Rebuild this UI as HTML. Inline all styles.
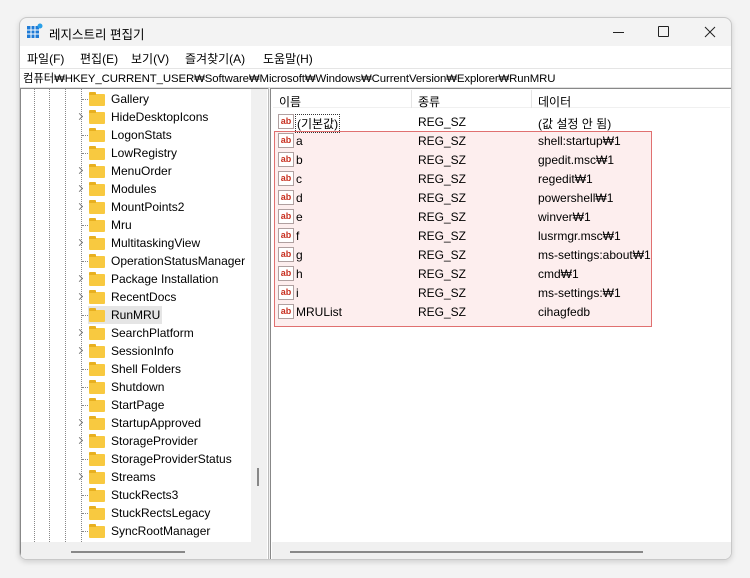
<!DOCTYPE html>
<html><head><meta charset="utf-8"><style>
*{margin:0;padding:0;box-sizing:border-box}
body{width:750px;height:578px;background:#f3f3f3;position:relative;overflow:hidden;font-family:"Liberation Sans","Noto Sans CJK KR",sans-serif;font-size:12px;color:#000}
.win{position:absolute;left:19px;top:17px;width:713px;height:543px;background:#f3f3f3;border:1px solid #c8c8c8;border-radius:8px;box-shadow:0 2px 6px rgba(0,0,0,.15);overflow:hidden}
.a{position:absolute;white-space:nowrap}
.fold{position:absolute;width:16px;height:12px;background:#f8c940;border-radius:1px}
.fold:before{content:"";position:absolute;left:0;top:-2px;width:7px;height:3px;background:#e8b020;border-radius:1px 1px 0 0}
.chev{position:absolute;width:5px;height:5px;border-right:1px solid #777;border-top:1px solid #777;transform:rotate(45deg)}
.ab{position:absolute;width:16px;height:15px;border:1px solid #b0a0a0;background:#fff;font-size:9px;font-weight:bold;color:#c83020;line-height:12px;text-align:center}
.vd{position:absolute;top:88px;height:453px;border-left:1px dotted #888}
</style></head><body>
<div class="win">
<svg class="a" style="left:7px;top:5px" width="16" height="16"><rect x="0" y="3" width="12" height="12" fill="#1f7bd6"/><path d="M4 3v12M8 3v12M0 7h12M0 11h12" stroke="#fff" stroke-width="1"/><circle cx="13" cy="3" r="2.5" fill="#2aa0e8"/></svg>
<div class="a" style="left:29px;top:6px;font-size:12.5px">레지스트리 편집기</div>
<div class="a" style="left:593px;top:14px;width:11px;border-top:1px solid #222"></div>
<div class="a" style="left:638px;top:8px;width:11px;height:11px;border:1px solid #222;border-radius:1px"></div>
<svg class="a" style="left:684px;top:8px" width="12" height="12"><path d="M1 1L11 11M11 1L1 11" stroke="#222" stroke-width="1"/></svg>
<div class="a" style="left:0;top:28px;width:713px;height:22px;background:#fff"></div>
<div class="a" style="left:7px;top:32px">파일(F)</div>
<div class="a" style="left:60px;top:32px">편집(E)</div>
<div class="a" style="left:111px;top:32px">보기(V)</div>
<div class="a" style="left:165px;top:32px">즐겨찾기(A)</div>
<div class="a" style="left:243px;top:32px">도움말(H)</div>
<div class="a" style="left:0;top:50px;width:713px;height:20px;background:#fff;border-top:1px solid #e5e5e5;border-bottom:1px solid #e0e0e0"></div>
<div class="a" style="left:3px;top:52px;font-size:11.4px;letter-spacing:-0.1px">컴퓨터₩HKEY_CURRENT_USER₩Software₩Microsoft₩Windows₩CurrentVersion₩Explorer₩RunMRU</div>
<div class="a" style="left:0;top:70px;width:248px;height:473px;background:#fff;border:1px solid #888;border-right:none"></div>
<div class="a" style="left:231px;top:71px;width:16px;height:453px;background:#f0f0f0"></div>
<div class="a" style="left:237px;top:450px;width:2px;height:18px;background:#888"></div>
<div class="a" style="left:1px;top:524px;width:246px;height:18px;background:#f0f0f0"></div>
<div class="a" style="left:51px;top:533px;width:114px;height:2px;background:#888"></div>
<div class="a" style="left:248px;top:70px;width:3px;height:473px;background:#f0f0f0;border-left:1px solid #bbb;border-right:1px solid #888"></div>
<div class="a" style="left:251px;top:70px;width:462px;height:473px;background:#fff;border:1px solid #888;border-left:none"></div>
<div class="a" style="left:252px;top:524px;width:460px;height:18px;background:#f0f0f0"></div>
<div class="a" style="left:270px;top:533px;width:353px;height:2px;background:#888"></div>
<div class="a" style="left:253px;top:71px;width:457px;height:19px;border-bottom:1px solid #f0f0f0"></div>
<div class="a" style="left:391px;top:72px;height:18px;border-left:1px solid #e5e5e5"></div>
<div class="a" style="left:511px;top:72px;height:18px;border-left:1px solid #e5e5e5"></div>
<div class="a" style="left:259px;top:75px">이름</div>
<div class="a" style="left:398px;top:75px">종류</div>
<div class="a" style="left:518px;top:75px">데이터</div>
<div class="a" style="left:254px;top:113px;width:378px;height:196px;background:#fdeeee;border:1px solid #e07070"></div>
</div>
<script>
var w=document.querySelector('.win');
function add(h){w.insertAdjacentHTML('beforeend',h)}
var r=[["(기본값)","(값 설정 안 됨)"],["a","shell:startup₩1"],["b","gpedit.msc₩1"],["c","regedit₩1"],["d","powershell₩1"],["e","winver₩1"],["f","lusrmgr.msc₩1"],["g","ms-settings:about₩1"],["h","cmd₩1"],["i","ms-settings:₩1"],["MRUList","cihagfedb"]];
r.forEach(function(x,i){var y=97+i*19;
add('<div class="ab" style="left:258px;top:'+(y-1)+'px">ab</div>');
add('<div class="a" style="left:276px;top:'+y+'px;'+(i==0?'outline:1px dotted #333;padding:0 1px;':'')+'">'+x[0]+'</div>');
add('<div class="a" style="left:398px;top:'+y+'px">REG_SZ</div>');
add('<div class="a" style="left:518px;top:'+y+'px">'+x[1]+'</div>');});
[14,29,45,61].forEach(function(x){add('<div class="vd" style="left:'+x+'px;top:71px;height:453px"></div>')});
var t=[["Gallery",0],["HideDesktopIcons",1],["LogonStats",0],["LowRegistry",0],["MenuOrder",1],["Modules",1],["MountPoints2",1],["Mru",0],["MultitaskingView",1],["OperationStatusManager",0],["Package Installation",1],["RecentDocs",1],["RunMRU",0],["SearchPlatform",1],["SessionInfo",1],["Shell Folders",0],["Shutdown",0],["StartPage",0],["StartupApproved",1],["StorageProvider",1],["StorageProviderStatus",0],["Streams",1],["StuckRects3",0],["StuckRectsLegacy",0],["SyncRootManager",0]];
t.forEach(function(x,i){var y=72+i*18;
if(x[0]=="RunMRU")add('<div class="a" style="left:68px;top:'+y+'px;width:74px;height:18px;background:#e5e5e5"></div>');
if(x[1])add('<div class="chev" style="left:57px;top:'+(y+6)+'px"></div>');
else add('<div class="a" style="left:62px;top:'+(y+9)+'px;width:6px;border-top:1px dotted #888"></div>');
add('<div class="fold" style="left:69px;top:'+(y+4)+'px"></div>');
add('<div class="a" style="left:91px;top:'+(y+2)+'px">'+x[0]+'</div>');});
</script>
</body></html>
